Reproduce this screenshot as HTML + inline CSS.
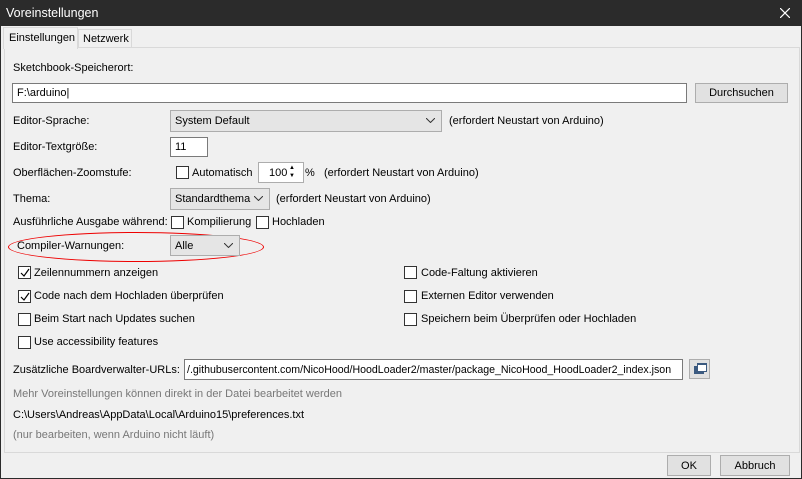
<!DOCTYPE html>
<html><head><meta charset="utf-8"><style>
*{box-sizing:border-box;margin:0;padding:0}
body{width:802px;height:479px;background:#2b2b2b;font-family:"Liberation Sans",sans-serif;font-size:11px;color:#000;position:relative;overflow:hidden}
.a{position:absolute;white-space:nowrap}
#win{position:absolute;left:1px;top:26px;width:800px;height:452px;background:#f0f0f0}
.box{position:absolute;background:#fff;border:1px solid #7a7a7a}
.cb{position:absolute;width:13px;height:13px;background:#fff;border:1px solid #333}
.btn{position:absolute;background:#e1e1e1;border:1px solid #adadad;text-align:center}
.dd{position:absolute;background:#e5e5e5;border:1px solid #adadad;padding-left:4px}
.chev{position:absolute;right:6px;top:7px}
</style></head><body>
<div class="a" style="left:6px;top:6px;color:#fff;font-size:12.5px">Voreinstellungen</div>
<svg class="a" style="left:780px;top:8px" width="10" height="10"><path d="M0 0L10 10M10 0L0 10" stroke="#fff" stroke-width="1.2"/></svg>
<div id="win">
<div class="a" style="left:3px;top:21px;width:796px;height:406px;border:1px solid #d9d9d9;background:#f0f0f0"></div>
<div class="a" style="left:2px;top:1px;width:75px;height:22px;background:#f0f0f0;border:1px solid #d9d9d9;border-bottom:none;padding:4px 0 0 5px">Einstellungen</div>
<div class="a" style="left:77px;top:3px;width:54px;height:19px;background:#f0f0f0;border:1px solid #d9d9d9;padding:3px 0 0 4px">Netzwerk</div>
<div class="a" style="left:12px;top:36px">Sketchbook-Speicherort:</div>
<div class="box" style="left:11px;top:57px;width:675px;height:20px;padding:3px 0 0 4px">F:\arduino|</div>
<div class="btn" style="left:694px;top:57px;width:93px;height:20px;padding-top:3px">Durchsuchen</div>
<div class="a" style="left:12px;top:89px">Editor-Sprache:</div>
<div class="dd" style="left:169px;top:84px;width:272px;height:22px;padding-top:4px">System Default<svg class="chev" width="9" height="5"><path d="M0 0L4.5 4.5L9 0" fill="none" stroke="#333"/></svg></div>
<div class="a" style="left:448px;top:89px">(erfordert Neustart von Arduino)</div>
<div class="a" style="left:12px;top:115px">Editor-Textgröße:</div>
<div class="box" style="left:169px;top:111px;width:38px;height:20px;padding:3px 0 0 4px">11</div>
<div class="a" style="left:12px;top:141px">Oberflächen-Zoomstufe:</div>
<div class="cb" style="left:175px;top:140px"></div>
<div class="a" style="left:191px;top:141px">Automatisch</div>
<div class="box" style="left:257px;top:136px;width:46px;height:21px;padding:4px 0 0 10px;border-color:#adadad">100</div>
<div class="a" style="left:288px;top:138px;font-size:6px;line-height:8px">▲<br>▼</div>
<div class="a" style="left:304px;top:141px">%&nbsp;&nbsp;&nbsp;(erfordert Neustart von Arduino)</div>
<div class="a" style="left:12px;top:167px">Thema:</div>
<div class="dd" style="left:169px;top:162px;width:100px;height:22px;padding-top:4px">Standardthema<svg class="chev" width="9" height="5"><path d="M0 0L4.5 4.5L9 0" fill="none" stroke="#333"/></svg></div>
<div class="a" style="left:275px;top:167px">(erfordert Neustart von Arduino)</div>
<div class="a" style="left:12px;top:190px">Ausführliche Ausgabe während:</div>
<div class="cb" style="left:170px;top:190px"></div>
<div class="a" style="left:186px;top:190px">Kompilierung</div>
<div class="cb" style="left:255px;top:190px"></div>
<div class="a" style="left:271px;top:190px">Hochladen</div>
<div class="a" style="left:7px;top:206px;width:256px;height:30px;border:1.5px solid #e00;border-radius:50%"></div>
<div class="a" style="left:16px;top:214px">Compiler-Warnungen:</div>
<div class="dd" style="left:169px;top:209px;width:70px;height:21px;padding-top:4px">Alle<svg class="chev" width="9" height="5"><path d="M0 0L4.5 4.5L9 0" fill="none" stroke="#333"/></svg></div>
<div class="cb" style="left:17px;top:240px"><svg class="a" style="left:1px;top:1px" width="10" height="10"><path d="M1 5L4 8L9 1" fill="none" stroke="#000" stroke-width="1.2"/></svg></div>
<div class="a" style="left:33px;top:241px">Zeilennummern anzeigen</div>
<div class="cb" style="left:17px;top:264px"><svg class="a" style="left:1px;top:1px" width="10" height="10"><path d="M1 5L4 8L9 1" fill="none" stroke="#000" stroke-width="1.2"/></svg></div>
<div class="a" style="left:33px;top:264px">Code nach dem Hochladen überprüfen</div>
<div class="cb" style="left:17px;top:287px"></div>
<div class="a" style="left:33px;top:287px">Beim Start nach Updates suchen</div>
<div class="cb" style="left:17px;top:310px"></div>
<div class="a" style="left:33px;top:310px">Use accessibility features</div>
<div class="cb" style="left:403px;top:240px"></div>
<div class="a" style="left:420px;top:241px">Code-Faltung aktivieren</div>
<div class="cb" style="left:403px;top:264px"></div>
<div class="a" style="left:420px;top:264px">Externen Editor verwenden</div>
<div class="cb" style="left:403px;top:287px"></div>
<div class="a" style="left:420px;top:287px">Speichern beim Überprüfen oder Hochladen</div>
<div class="a" style="left:12px;top:338px">Zusätzliche Boardverwalter-URLs:</div>
<div class="box" style="left:183px;top:333px;width:499px;height:21px;padding:4px 0 0 2px;overflow:hidden;font-size:10.6px">/.githubusercontent.com/NicoHood/HoodLoader2/master/package_NicoHood_HoodLoader2_index.json</div>
<div class="btn" style="left:688px;top:333px;width:21px;height:20px"><div class="a" style="left:4px;top:6px;width:10px;height:8px;background:#3b5a80"></div><div class="a" style="left:7px;top:3px;width:10px;height:9px;background:#fff;border:1px solid #3b5a80;border-top-width:2px"></div></div>
<div class="a" style="left:12px;top:362px;color:#777">Mehr Voreinstellungen können direkt in der Datei bearbeitet werden</div>
<div class="a" style="left:12px;top:383px">C:\Users\Andreas\AppData\Local\Arduino15\preferences.txt</div>
<div class="a" style="left:12px;top:403px;color:#777">(nur bearbeiten, wenn Arduino nicht läuft)</div>
<div class="btn" style="left:666px;top:429px;width:44px;height:21px;padding-top:4px">OK</div>
<div class="btn" style="left:719px;top:429px;width:70px;height:21px;padding-top:4px">Abbruch</div>
</div>
</body></html>
